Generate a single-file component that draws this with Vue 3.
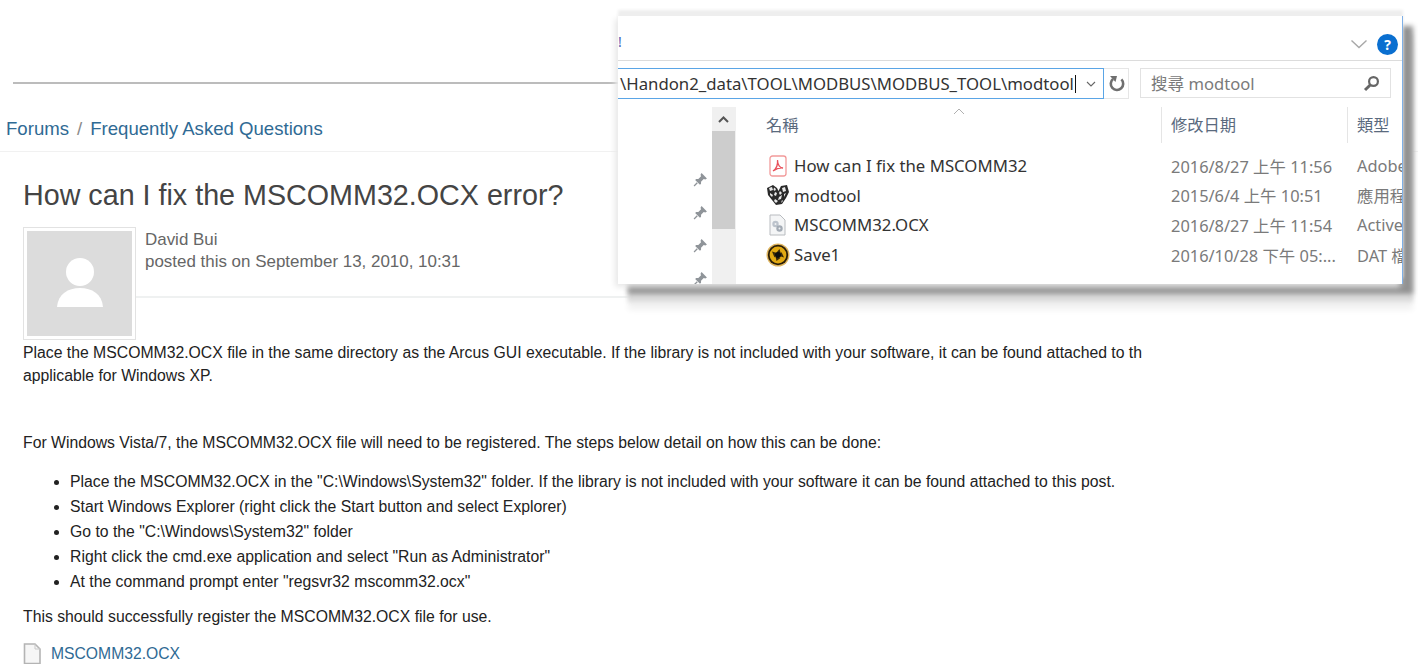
<script setup>
const steps = [
  'Place the MSCOMM32.OCX in the "C:\\Windows\\System32" folder. If the library is not included with your software it can be found attached to this post.',
  'Start Windows Explorer (right click the Start button and select Explorer)',
  'Go to the "C:\\Windows\\System32" folder',
  'Right click the cmd.exe application and select "Run as Administrator"',
  'At the command prompt enter "regsvr32 mscomm32.ocx"'
]
const files = [
  { name: 'How can I fix the MSCOMM32', date: '2016/8/27 上午 11:56', type: 'Adobe', icon: 'pdf' },
  { name: 'modtool', date: '2015/6/4 上午 10:51', type: '應用程', icon: 'app' },
  { name: 'MSCOMM32.OCX', date: '2016/8/27 上午 11:54', type: 'Active', icon: 'ocx' },
  { name: 'Save1', date: '2016/10/28 下午 05:...', type: 'DAT 檔', icon: 'dat' }
]
</script>

<template>
  <div class="page">
    <div class="rule"></div>
    <nav class="crumbs">
      <a>Forums</a><span class="sep">/</span><a>Frequently Asked Questions</a>
    </nav>
    <main class="post">
      <h1>How can I fix the MSCOMM32.OCX error?</h1>
      <div class="author">
        <div class="avatar">
          <svg viewBox="0 0 105 105" width="105" height="105">
            <rect width="105" height="105" fill="#dcdcdc" />
            <circle cx="53" cy="41" r="14" fill="#fff" />
            <path d="M30 76C31 63 41 57 53 57C65 57 75 63 76 76Z" fill="#fff" />
          </svg>
        </div>
        <div class="meta">
          <div>David Bui</div>
          <div>posted this on September 13, 2010, 10:31</div>
        </div>
      </div>
      <div class="body">
        <p class="intro">Place the MSCOMM32.OCX file in the same directory as the Arcus GUI executable. If the library is not included with your software, it can be found attached to th<br>applicable for Windows XP.</p>
        <p class="vista">For Windows Vista/7, the MSCOMM32.OCX file will need to be registered. The steps below detail on how this can be done:</p>
        <ul>
          <li v-for="s in steps" :key="s">{{ s }}</li>
        </ul>
        <p class="done">This should successfully register the MSCOMM32.OCX file for use.</p>
        <div class="attach">
          <svg width="18" height="22" viewBox="0 0 18 22">
            <path d="M1.5 1H12L17 6V20.5H1.5Z" fill="#f6f6f6" stroke="#b4b4b4" stroke-width="1.6" />
            <path d="M12 1V6H17" fill="none" stroke="#c8c8c8" />
          </svg>
          <a>MSCOMM32.OCX</a>
        </div>
      </div>
    </main>

    <section class="win">
      <div class="titlebar">
        <span class="frag">!</span>
        <svg class="chev" width="18" height="10" viewBox="0 0 18 10"><path d="M1.5 1.5L9 8.5L16.5 1.5" fill="none" stroke="#a8a8a8" stroke-width="1.4" /></svg>
        <span class="help">?</span>
      </div>
      <div class="toolbar">
        <div class="address">
          <span class="path">\Handon2_data\TOOL\MODBUS\MODBUS_TOOL\modtool</span><i class="caret"></i>
          <svg class="dd" width="10" height="6" viewBox="0 0 10 6"><path d="M1 1L5 5L9 1" fill="none" stroke="#666" stroke-width="1.1" /></svg>
        </div>
        <div class="refresh">
          <svg width="17" height="17" viewBox="0 0 17 17"><path d="M5 4A6.2 6.2 0 1 0 13.4 4.4" fill="none" stroke="#6f6f6f" stroke-width="2.6" /><path d="M2 1H9L7.5 7Z" fill="#6f6f6f" /></svg>
        </div>
        <div class="search">
          <span>搜尋 modtool</span>
          <svg width="17" height="17" viewBox="0 0 17 17"><circle cx="10.5" cy="6.5" r="4.4" fill="none" stroke="#666" stroke-width="2.2" /><path d="M7.2 10L2 15" stroke="#666" stroke-width="3" /></svg>
        </div>
      </div>
      <div class="content">
        <aside class="nav">
          <div class="pins">
            <svg v-for="n in 4" :key="n" width="15" height="15" viewBox="0 0 14 14"><path d="M8 1L13 6L11.5 7L10 6.5L7.5 9L7.5 11L6.5 12L2 7.5L3 6.5L5 6.5L7.5 4L7 2.5Z" fill="#8f9499" /><path d="M4 10L1 13" stroke="#8f9499" stroke-width="1.2" /></svg>
          </div>
          <div class="scroll">
            <div class="arrow"><svg width="11" height="7" viewBox="0 0 11 7"><path d="M1 6L5.5 1.5L10 6" fill="none" stroke="#555" stroke-width="2" /></svg></div>
            <div class="thumb"></div>
          </div>
        </aside>
        <div class="list">
          <div class="head">
            <span class="h-name">名稱</span>
            <svg class="sort" width="12" height="7" viewBox="0 0 12 7"><path d="M1 6L6 1L11 6" fill="none" stroke="#b0b0b0" /></svg>
            <span class="h-date">修改日期</span>
            <span class="h-type">類型</span>
          </div>
          <div v-for="f in files" :key="f.name" class="row">
            <span class="ico">
              <svg v-if="f.icon === 'pdf'" width="18" height="22" viewBox="0 0 18 22">
                <rect x="1" y="1" width="16" height="20" rx="2.5" fill="#fff" stroke="#f29a9a" stroke-width="1.3" />
                <path d="M4 16C7 14 9 10 8.5 5C8.5 10 11 13 14 13C11 12.5 7 14 4 16Z" fill="none" stroke="#e8505a" stroke-width="1.3" />
              </svg>
              <svg v-else-if="f.icon === 'app'" width="24" height="22" viewBox="0 0 24 22">
                <path d="M1 4L7 1L11 4L12.5 7L15 2L21 1L23 8L20 14L16 20L10 21L6 16L2 11Z" fill="#2a2a2a" />
                <path d="M3 4L6 3L7 6L4 7ZM8 3.5L10 5L9 7L7.5 6ZM9 8L11 9L10 12L8 11ZM16 4L19 3L20 7L17 8ZM14 7L16 9L14 11L13 9ZM4 9L7 11L6 13L4 11ZM13 13L16 11L15 15L12 16ZM9 15L12 17L10 19L8 17ZM18 10L20 9L18 13ZM16 16L17 17L15 19Z" fill="#e8e8e8" />
              </svg>
              <svg v-else-if="f.icon === 'ocx'" width="17" height="22" viewBox="0 0 17 22">
                <path d="M1 1H11L16 6V21H1Z" fill="#f4f5f6" stroke="#b9bcc0" />
                <circle cx="6.5" cy="10" r="3.2" fill="#bcc3cc" />
                <circle cx="10.5" cy="14.5" r="3.2" fill="#a2aab4" />
                <circle cx="6.5" cy="10" r="1" fill="#f0f2f4" />
                <circle cx="10.5" cy="14.5" r="1" fill="#f0f2f4" />
              </svg>
              <svg v-else width="24" height="24" viewBox="0 0 24 24">
                <circle cx="12" cy="12" r="11.5" fill="#e0b660" />
                <circle cx="12" cy="12" r="10.2" fill="#2a1e08" />
                <circle cx="12" cy="12" r="8.4" fill="#e2a912" />
                <path d="M6 8.5L11 10L8.5 14.5ZM13.5 6L15 11L10.5 9.5ZM18 14.5L13.5 13L15.5 9ZM10.5 18L9.5 13.5L14.5 15Z" fill="#3a2a08" />
                <circle cx="12" cy="12" r="3" fill="#0d0d0d" />
              </svg>
            </span>
            <span class="name">{{ f.name }}</span>
            <span class="date">{{ f.date }}</span>
            <span class="type">{{ f.type }}</span>
          </div>
        </div>
      </div>
    </section>
  </div>
</template>

<style>
html, body { margin: 0; background: #fff; overflow: hidden; }
</style>

<style scoped>
.page {
  position: relative;
  width: 1418px;
  height: 664px;
  overflow: hidden;
  background: #fff;
  font-family: "Liberation Sans", Arial, sans-serif;
  padding-top: 82px;
  box-sizing: border-box;
}
.rule { height: 2px; margin-left: 13px; width: 620px; background: #bcbcbc; }
.crumbs {
  margin-top: 34px;
  height: 34px;
  padding-left: 6px;
  font-size: 18.6px;
  line-height: 22px;
  border-bottom: 1px solid #f1f1f1;
  box-sizing: border-box;
}
.crumbs a { color: #2f6a94; }
.sep { color: #8a8a8a; margin: 0 8px; }
.post { padding-left: 23px; width: 1120px; }
h1 {
  margin: 27px 0 0;
  font-size: 28.7px;
  font-weight: 400;
  line-height: 32px;
  color: #444;
}
.author { display: flex; margin-top: 16px; height: 69px; border-bottom: 2px solid #eff1f1; }
.avatar {
  flex: none;
  width: 105px;
  height: 105px;
  padding: 3px;
  border: 1px solid #e2e2e2;
  margin-right: 9px;
  font-size: 0;
  background: #fff;
}
.meta { padding-top: 2px; font-size: 16.95px; line-height: 22px; color: #666; }
.body { font-size: 15.78px; color: #222; }
.body p { margin: 0; white-space: nowrap; }
.intro { margin-top: 43px !important; line-height: 23px; overflow: hidden; width: 1120px; }
.vista { margin-top: 45px !important; line-height: 22px; }
ul { margin: 16px 0 0; padding: 0 0 0 47px; }
li { line-height: 24.9px; white-space: nowrap; }
.done { margin-top: 11px !important; line-height: 22px; }
.attach { display: flex; align-items: center; gap: 10px; margin-top: 14px; height: 24px; }
.attach a { color: #2f6a94; font-size: 15.7px; }

.win {
  position: absolute;
  left: 618px;
  top: 16px;
  width: 785px;
  height: 268px;
  background: #fff;
  border-right: 1px solid #7fb0e6;
  box-sizing: border-box;
  font-family: "Noto Sans", "Noto Sans CJK TC", sans-serif;
  box-shadow: 0 -6px 3px #eeeeee, -3px 3px 6px #e8e8e8, 10px 10px 5px #929292, 10px 18px 4px #dcdcdc, 10px 26px 6px #f2f2f2;
  overflow: hidden;
}
.titlebar {
  height: 45px;
  display: flex;
  align-items: center;
  justify-content: flex-end;
  position: relative;
  border-bottom: 1px solid #dcdcdc;
  box-sizing: border-box;
  padding: 12px 4px 0 0;
  gap: 9px;
}
.frag { position: absolute; left: 0; top: 17px; font-size: 14px; line-height: 18px; color: #4a63b8; }
.help {
  width: 21px; height: 21px; border-radius: 50%;
  background: #0a6fd0; color: #fff; font-size: 14px; font-weight: 700;
  display: flex; align-items: center; justify-content: center;
}
.toolbar { display: flex; height: 31px; margin-top: 7px; box-sizing: border-box; }
.address {
  width: 486px;
  display: flex;
  align-items: center;
  border: 1px solid #5aa5e6;
  border-left: none;
  box-sizing: border-box;
  font-size: 16.75px;
  color: #333;
  position: relative;
  padding-left: 2px;
  white-space: nowrap;
}
.caret { width: 1px; height: 18px; background: #111; margin-left: 1px; }
.dd { position: absolute; right: 7px; top: 12px; }
.refresh {
  width: 25px;
  border: 1px solid #e6e6e6;
  border-left: none;
  box-sizing: border-box;
  display: flex; align-items: center; justify-content: center;
}
.search {
  margin-left: 11px;
  width: 251px;
  height: 30px;
  border: 1px solid #e2e2e2;
  box-sizing: border-box;
  padding: 0 10px 0 10px;
  display: flex; align-items: center; justify-content: space-between;
  font-size: 16.6px;
  color: #7a7a7a;
}
.content { display: flex; height: 185px; margin-top: 8px; }
.nav { width: 118px; display: flex; flex: none; border-right: 1px solid #f0f0f0; box-sizing: border-box; }
.pins {
  width: 94px;
  display: flex; flex-direction: column; align-items: flex-end;
  padding: 65px 4px 0 0;
  box-sizing: border-box;
  gap: 18px;
}
.scroll { width: 23px; background: #f0f0f0; }
.arrow { height: 24px; display: flex; align-items: center; justify-content: center; }
.thumb { height: 98px; background: #cdcdcd; }
.list { flex: 1; position: relative; }
.head {
  display: flex;
  height: 36px;
  font-size: 16.3px;
  line-height: 36px;
  color: #5a6a7e;
  position: relative;
  margin-bottom: 8px;
}
.head span { position: relative; }
.h-name { margin-left: 30px; width: 395px; }
.sort { position: absolute; left: 217px; top: 1px; }
.h-date { width: 186px; padding-left: 9px; border-left: 1px solid #e5e5e5; box-sizing: border-box; }
.h-type { padding-left: 9px; border-left: 1px solid #e5e5e5; }
.row {
  display: flex;
  align-items: center;
  height: 29.6px;
  font-size: 16.8px;
  white-space: nowrap;
}
.ico { width: 25px; margin: 0 4px 0 29px; flex: none; display: flex; align-items: center; justify-content: center; height: 24px; }
.name { width: 377px; color: #333; flex: none; }
.date { width: 186px; flex: none; font-size: 16.4px; color: #7a7a7a; }
.type { color: #7a7a7a; font-size: 16.4px; }
</style>
